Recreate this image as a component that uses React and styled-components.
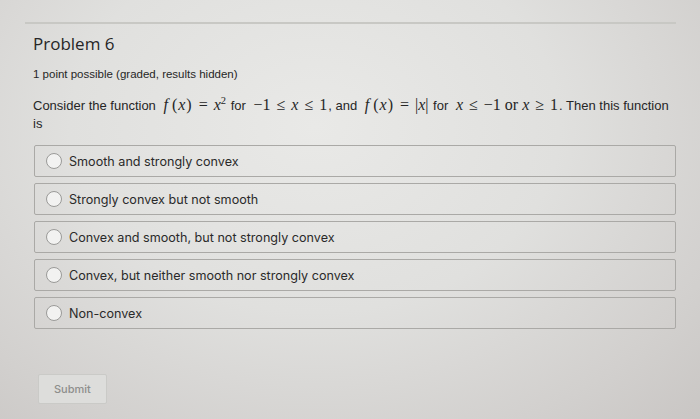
import React from 'react'
import styled, {createGlobalStyle} from 'styled-components'

const options = [
  'Smooth and strongly convex',
  'Strongly convex but not smooth',
  'Convex and smooth, but not strongly convex',
  'Convex, but neither smooth nor strongly convex',
  'Non-convex',
]

export default function App() {
  return (
    <>
      <GlobalStyle/>
      <Page>
        <Rule/>
        <Title>Problem 6</Title>
        <Meta>1 point possible (graded, results hidden)</Meta>
        <Question>
          Consider the function <M><I>f</I><Paren>(<I>x</I>)</Paren><Rel>=</Rel><I>x</I><sup>2</sup></M> for{' '}
          <M>−1<Rel>≤</Rel><I>x</I><Rel>≤</Rel>1</M>, and <M><I>f</I><Paren>(<I>x</I>)</Paren><Rel>=</Rel>|<I>x</I>|</M> for{' '}
          <M><I>x</I><Rel>≤</Rel>−1 or <I>x</I><Rel>≥</Rel>1</M>. Then this function is
        </Question>
        <Options>
          {options.map(o => (
            <Option key={o}>
              <Radio/>
              <span>{o}</span>
            </Option>
          ))}
        </Options>
        <Submit>Submit</Submit>
      </Page>
    </>
  )
}

const GlobalStyle = createGlobalStyle`
  html, body {
    margin: 0;
    width: 700px;
    height: 419px;
    overflow: hidden;
  }
  body {
    background: radial-gradient(ellipse at 45% 30%, #e9e9e7 0%, #e0e0de 45%, #d2d0ce 80%, #c9c6c4 100%);
    font-family: "Liberation Sans", Arial, sans-serif;
    color: #262626;
  }
`

const Page = styled.div`
  width: 643px;
  padding: 22px 0 0 33px;
  display: flex;
  flex-direction: column;
`

const Rule = styled.div`
  height: 2px;
  background: #c8c8c4;
  margin: 0 0 8px -8px;
`

const Title = styled.h2`
  margin: 0;
  font-family: "Open Sans", sans-serif;
  font-size: 17px;
  font-weight: 400;
  line-height: 24px;
`

const Meta = styled.div`
  margin-top: 11px;
  font-size: 11.5px;
  line-height: 14px;
`

const Question = styled.p`
  margin: 15px 0 0;
  font-size: 13px;
  line-height: 18px;
`

const M = styled.span`
  font-family: "Liberation Serif", serif;
  font-size: 16px;
  margin: 0 1px 0 4px;
  sup { font-size: 10.5px; line-height: 0; }
`

const Paren = styled.span`
  margin-left: 4px;
  letter-spacing: 1px;
`

const Rel = styled.span`
  padding: 0 6px;
`

const I = styled.i`
  font-style: italic;
`

const Options = styled.div`
  margin-top: 12px;
  margin-left: 1px;
  display: flex;
  flex-direction: column;
  gap: 6px;
`

const Option = styled.label`
  box-sizing: border-box;
  height: 32px;
  border: 1.5px solid #aaa9a6;
  border-radius: 2px;
  display: flex;
  align-items: center;
  gap: 7px;
  padding-left: 11px;
  font-family: Inter, sans-serif;
  font-size: 12.6px;
  color: #2a2a2a;
`

const Radio = styled.span`
  width: 14px;
  height: 14px;
  border-radius: 50%;
  border: 1.5px solid #9a9a98;
  background: #f2f2f1;
`

const Submit = styled.button`
  margin: 45px 0 0 5px;
  width: 69px;
  height: 30px;
  border: 1px solid #cacac7;
  background: #dddddb;
  border-radius: 2px;
  color: #8e8e8c;
  font-family: Inter, sans-serif;
  font-size: 11px;
  font-weight: 500;
  text-align: left;
  padding-left: 15px;
`
